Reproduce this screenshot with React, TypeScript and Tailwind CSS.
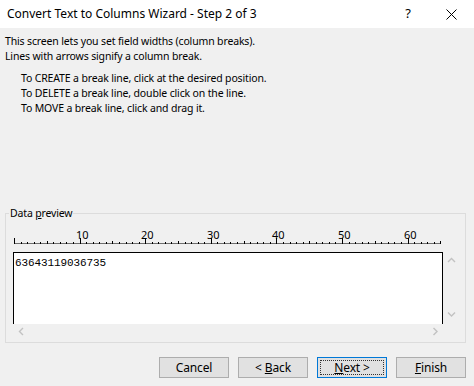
import React from 'react';

const UI = '"Noto Sans", "Open Sans", sans-serif';
const CHAR = 6.56;
const RULER_START = 1;

function Ruler() {
  const ticks = [];
  for (let i = 0; i <= 65; i++) {
    const x = RULER_START + i * CHAR;
    const h = i % 10 === 0 ? 6 : i % 5 === 0 ? 3 : 2;
    ticks.push(<rect key={i} x={Math.round(x)} y={16 - h} width={1} height={h} fill="#000" />);
  }
  const labels = [10, 20, 30, 40, 50, 60];
  return (
    <svg width="436" height="17" className="block overflow-visible">
      <rect x={RULER_START} y={15} width={Math.round(65 * CHAR)} height={1} fill="#6d6d6d" />
      {ticks}
      {labels.map((n) => (
        <text key={n} x={Math.round(RULER_START + n * CHAR) - 4} y={11} fontSize="11" fontFamily={UI} fill="#000">
          {n}
        </text>
      ))}
    </svg>
  );
}

function Chevron({ dir }: { dir: 'up' | 'down' | 'left' | 'right' }) {
  const pts = {
    up: '1,5 4.5,1.5 8,5',
    down: '1,1.5 4.5,5 8,1.5',
    left: '5,1 1.5,4.5 5,8',
    right: '1.5,1 5,4.5 1.5,8',
  }[dir];
  const vertical = dir === 'up' || dir === 'down';
  return (
    <svg width={vertical ? 9 : 7} height={vertical ? 7 : 9} className="block">
      <polyline points={pts} fill="none" stroke="#c2c2c2" strokeWidth="1.4" />
    </svg>
  );
}

function Button({ children, focused }: { children: React.ReactNode; focused?: boolean }) {
  return (
    <div
      className={`flex h-[21px] w-[70px] items-center justify-center border bg-[#e1e1e1] text-[12px] text-black ${
        focused ? 'border-[#0078d7] p-[2px]' : 'border-[#adadad]'
      }`}
    >
      {focused ? (
        <div className="flex h-full w-full items-center justify-center border border-dotted border-[#333]">{children}</div>
      ) : (
        children
      )}
    </div>
  );
}

export default function App() {
  return (
    <div className="flex h-[386px] w-[474px] flex-col overflow-hidden bg-[#f0f0f0] text-black" style={{ fontFamily: UI }}>
      <div className="flex h-[28px] shrink-0 items-center bg-white pl-[7px]">
        <span className="text-[12px]">Convert Text to Columns Wizard - Step 2 of 3</span>
        <span className="ml-auto w-[14px] text-center text-[13px]">?</span>
        <svg width="11" height="11" className="ml-[31px] mr-[17px]">
          <path d="M0.5 0.5 L10.5 10.5 M10.5 0.5 L0.5 10.5" stroke="#000" strokeWidth="1" />
        </svg>
      </div>

      <div className="flex flex-1 flex-col px-[5px] pt-[6px] text-[10.5px] leading-[15px] tracking-[-0.15px]">
        <p>This screen lets you set field widths (column breaks).</p>
        <p>Lines with arrows signify a column break.</p>
        <div className="mt-[7px] pl-[16px]">
          <p>To CREATE a break line, click at the desired position.</p>
          <p>To DELETE a break line, double click on the line.</p>
          <p>To MOVE a break line, click and drag it.</p>
        </div>

        <fieldset className="mt-[90px] mr-[3px] border border-[#dcdcdc] pl-[7px] pr-[4px] pb-[4px]">
          <legend className="ml-[-4px] px-[1px] text-[10.5px] tracking-[-0.15px]">
            Data <span className="underline">p</span>review
          </legend>
          <div className="mt-[7px]">
            <Ruler />
          </div>
          <div className="mt-[7px] flex">
            <div className="flex flex-col">
              <div className="h-[72px] w-[430px] border-x border-t border-black bg-white">
                <div
                  className="pt-[4px] pl-[1px] text-[11px] leading-[13px] tracking-[-0.1px]"
                  style={{ fontFamily: '"Liberation Mono", monospace' }}
                >
                  63643119036735
                </div>
              </div>
              <div className="flex h-[14px] items-center justify-between pl-[5px] pr-[4px]">
                <Chevron dir="left" />
                <Chevron dir="right" />
              </div>
            </div>
            <div className="flex h-[72px] w-[17px] flex-col items-center justify-between pt-[5px] pb-[6px]">
              <Chevron dir="up" />
              <Chevron dir="down" />
            </div>
          </div>
        </fieldset>

        <div className="mt-[14px] mr-[3px] flex justify-end gap-[9px]">
          <Button>Cancel</Button>
          <Button>
            &lt; <span className="ml-[3px] underline">B</span>ack
          </Button>
          <Button focused>
            <span className="underline">N</span>ext &gt;
          </Button>
          <Button>
            <span className="underline">F</span>inish
          </Button>
        </div>
      </div>
    </div>
  );
}
